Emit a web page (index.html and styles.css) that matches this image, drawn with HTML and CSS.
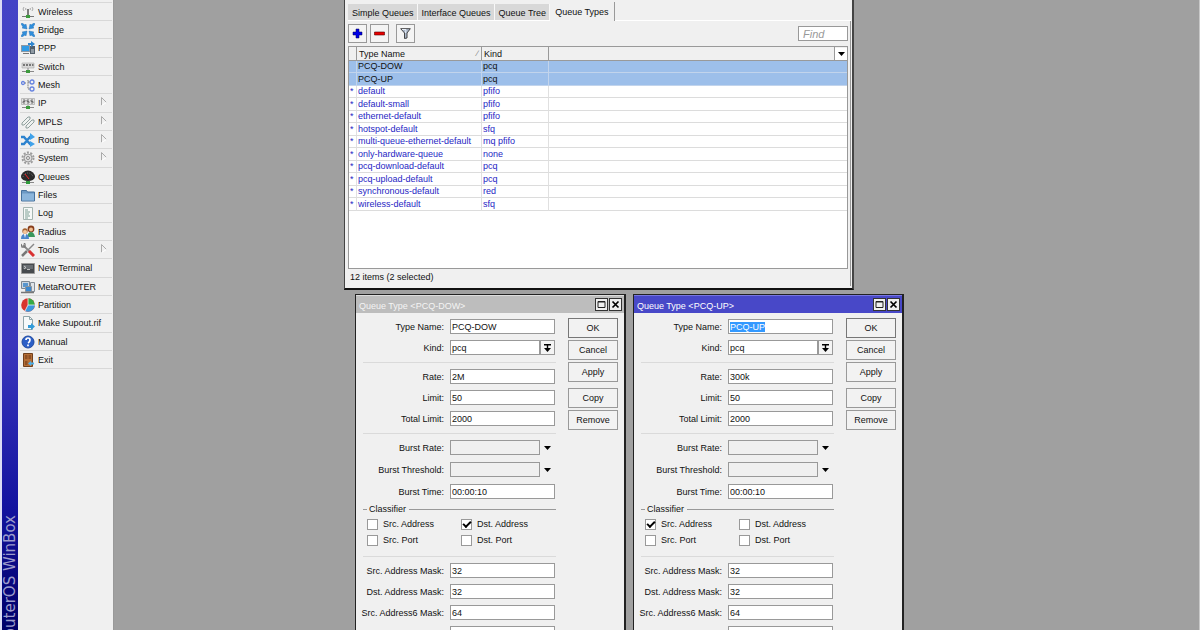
FILE: index.html
```html
<!DOCTYPE html>
<html lang="en">
<head>
<meta charset="utf-8">
<title>RouterOS WinBox</title>
<link rel="stylesheet" href="styles.css">
</head>
<body>
<div class="app">
  <div class="rail"><span class="rail-text">RouterOS WinBox</span></div>
  <nav class="side">
    <ul class="menu">
      <li><a href="#"><svg viewBox="0 0 14 14"><path d="M3 2q-2 2 0 4M11 2q2 2 0 4M5 3q-1 1 0 2M9 3q1 1 0 2" fill="none" stroke="#aaa"/><path d="M7 4v7" stroke="#555" stroke-width="1.5"/><path d="M1 11.500h12" stroke="#777"/><path d="M5 10h4v3H5z" fill="#3c9a3c"/></svg>Wireless</a></li>
      <li><a href="#"><svg viewBox="0 0 14 14"><g fill="#2f8fdc" stroke="#1c65ab" stroke-width=".4"><path d="M0 1l1-1 3 2 1-1 1 5-5-1 1-1zM14 1l-1-1-3 2-1-1-1 5 5-1-1-1zM0 13l1 1 3-2 1 1 1-5-5 1 1 1zM14 13l-1 1-3-2-1 1-1-5 5 1-1 1z"/></g></svg>Bridge</a></li>
      <li><a href="#"><svg viewBox="0 0 14 14"><path d="M0 4h9v7H0z" fill="#8c98a4"/><path d="M1 5h7v5H1z" fill="#2f9be6"/><path d="M2 12h6v1H2z" fill="#777"/><path d="M9 5h5v8H9z" fill="#53606c"/><path d="M10 9h3M10 11h3" stroke="#cdd5dc"/><path d="M7 4V2h3V0l4 3-4 3V4z" fill="#2e86d0"/></svg>PPP</a></li>
      <li><a href="#"><svg viewBox="0 0 14 14"><path d="M1 3h12v5H1z" fill="#d8d8d8" stroke="#aaa" stroke-width=".6"/><path d="M2 5h2M5 5h2M8 5h2M11 5h1.500" stroke="#777" stroke-width="2"/><path d="M7 8v3M1 11.500h12" stroke="#888"/><path d="M5 10h4v3H5z" fill="#3c9a3c"/></svg>Switch</a></li>
      <li><a href="#"><svg viewBox="0 0 14 14"><g fill="none" stroke="#6683e0" stroke-width="1.300"><circle cx="2" cy="5" r="1.500"/><circle cx="11" cy="4" r="2"/><circle cx="11" cy="11" r="2"/></g><path d="M4 5h1M7 2v9M7 4h2M7 11h2" fill="none" stroke="#777" stroke-dasharray="1.500 .7"/></svg>Mesh</a></li>
      <li><a href="#"><svg viewBox="0 0 14 14"><path d="M.5 2.500h13v6H.5z" fill="#e2e2e2" stroke="#aaa" stroke-width=".7"/><path d="M2 4h2v1.500H2V7h2M8 4H6v1.500h2V7H6M12 4h-2v1.500h2V7h-2" fill="none" stroke="#555" stroke-width=".8"/><path d="M7 9v2M1 11.500h12" stroke="#888"/><path d="M5 10h4v3H5z" fill="#3c9a3c"/></svg>IP<svg class="more" viewBox="0 0 6 9"><path d="M.5 8.500V.5l5 5" fill="none" stroke="#aaa"/><path d="M5.500 5.500l-5 3" stroke="#fff"/></svg></a></li>
      <li><a href="#"><svg viewBox="0 0 14 14"><path d="M1 8l6-6 2 0 0 2-6 6-2 0zM5 11l6-6 2 0 0 2-6 6-2 0z" fill="#eef1f0" stroke="#849694" stroke-width=".9"/></svg>MPLS<svg class="more" viewBox="0 0 6 9"><path d="M.5 8.500V.5l5 5" fill="none" stroke="#aaa"/><path d="M5.500 5.500l-5 3" stroke="#fff"/></svg></a></li>
      <li><a href="#"><svg viewBox="0 0 14 14"><path d="M0 4h3l6 7h2M0 11h3l6-7h2" fill="none" stroke="#2d83cf" stroke-width="2.400"/><path d="M9 0l5 4-5 3zM9 8l5 3-5 3z" fill="#3fa2ea"/></svg>Routing<svg class="more" viewBox="0 0 6 9"><path d="M.5 8.500V.5l5 5" fill="none" stroke="#aaa"/><path d="M5.500 5.500l-5 3" stroke="#fff"/></svg></a></li>
      <li><a href="#"><svg viewBox="0 0 14 14"><circle cx="7" cy="7" r="5.500" fill="none" stroke="#9b9b9b" stroke-width="2" stroke-dasharray="2 1.450"/><circle cx="7" cy="7" r="4" fill="#ddd" stroke="#999"/><circle cx="7" cy="7" r="1.500" fill="#f6f6f6" stroke="#888"/></svg>System<svg class="more" viewBox="0 0 6 9"><path d="M.5 8.500V.5l5 5" fill="none" stroke="#aaa"/><path d="M5.500 5.500l-5 3" stroke="#fff"/></svg></a></li>
      <li><a href="#"><svg viewBox="0 0 14 14"><path d="M0 7a7 6.500 0 0 1 14 0q-1 4-7 4T0 7z" fill="#292929"/><path d="M2 7q1-4 5-4t5 4" fill="none" stroke="#888" stroke-width=".7" stroke-dasharray="1 1"/><path d="M4 4l4 5" stroke="#e22"/><path d="M1 12.500h12" stroke="#888"/><path d="M5 11h4v3H5z" fill="#2f9a3a"/></svg>Queues</a></li>
      <li><a href="#"><svg viewBox="0 0 14 14"><path d="M.5 2.500h5l1 1.500h7v9H.5z" fill="#6c99c4" stroke="#47719c"/><path d="M1 5.500h12v7H1z" fill="#8cb5db"/></svg>Files</a></li>
      <li><a href="#"><svg viewBox="0 0 14 14"><path d="M2.500 1.500h9v12h-9z" fill="#f6f9f8" stroke="#a4b5b0"/><path d="M4 4h3M4 6h5M4 8h4M4 10h5M4 12h3" stroke="#7fa095"/></svg>Log</a></li>
      <li><a href="#"><svg viewBox="0 0 14 14"><circle cx="10" cy="4" r="3.400" fill="#883d1c"/><circle cx="10" cy="4.500" r="2" fill="#f0bd90"/><path d="M6 12q1-5 4-5t4 5z" fill="#39975c"/><circle cx="4" cy="6" r="2.700" fill="#a46331"/><circle cx="4" cy="7" r="2" fill="#f4c69b"/><path d="M0 14q0-5 4-5t4 5z" fill="#4a86cb"/><path d="M3 9l1 4 1-4z" fill="#fff"/></svg>Radius</a></li>
      <li><a href="#"><svg viewBox="0 0 14 14"><path d="M2 2l10 10" stroke="#888" stroke-width="1.800"/><path d="M0 1l1 3 3 0 0-3-1-1" fill="none" stroke="#777" stroke-width="1.300"/><path d="M13 1L7 7" stroke="#888" stroke-width="1.500"/><path d="M1 13l5-5" stroke="#777" stroke-width="2.500"/><path d="M8 8l5 5" stroke="#d93131" stroke-width="3"/></svg>Tools<svg class="more" viewBox="0 0 6 9"><path d="M.5 8.500V.5l5 5" fill="none" stroke="#aaa"/><path d="M5.500 5.500l-5 3" stroke="#fff"/></svg></a></li>
      <li><a href="#"><svg viewBox="0 0 14 14"><path d="M.5 2.500h13v10H.5z" fill="#464a4e" stroke="#999"/><path d="M2 4h10v4H2z" fill="#686d72"/><path d="M3 5l2 1.500L3 8M6 8.500h3" fill="none" stroke="#ddd" stroke-width=".8"/></svg>New Terminal</a></li>
      <li><a href="#"><svg viewBox="0 0 14 14"><path d="M.5 1.500h8v7h-8z" fill="#c9d6e1" stroke="#7c8791"/><path d="M2 3h5v4H2z" fill="#5796cf"/><path d="M9.500 2.500h4v9h-4z" fill="#dfe4e8" stroke="#858e96"/><path d="M4.500 6.500h6v5h-6z" fill="#3c89d0" stroke="#8a949d"/><path d="M0 12.500h13" stroke="#777" stroke-width="1.500"/></svg>MetaROUTER</a></li>
      <li><a href="#"><svg viewBox="0 0 14 14"><circle cx="7" cy="7" r="6.800" fill="#d8332c"/><path d="M7 7V.2A6.800 6.800 0 0 1 13.800 7z" fill="#35aa45"/><path d="M7 7h6.800A6.800 6.800 0 0 1 4 13z" fill="#3b97dc"/><path d="M7 0v7h7M7 7l-3 6" fill="none" stroke="#fff" stroke-width=".7"/></svg>Partition</a></li>
      <li><a href="#"><svg viewBox="0 0 14 14"><path d="M2.500.5h6l3 3v10h-9z" fill="#f5f9fa" stroke="#8fa5a9"/><path d="M8.500.5v3h3" fill="none" stroke="#8fa5a9"/><path d="M7 9h3V7l4 3.500-4 3.500v-2H7z" fill="#329bd9"/></svg>Make Supout.rif</a></li>
      <li><a href="#"><svg viewBox="0 0 14 14"><circle cx="7" cy="7" r="6" fill="#2c5fc7" stroke="#204a9e"/><path d="M5 5q0-2 2-2t2 2-2 3M7 9.500v1.800" fill="none" stroke="#fff" stroke-width="1.700"/></svg>Manual</a></li>
      <li><a href="#"><svg viewBox="0 0 14 14"><path d="M2.500.5h9v13h-9z" fill="#b56f38" stroke="#70401c"/><path d="M4 2h2.500v4H4zM7.500 2H10v4H7.500zM4 8h2.500v4H4z" fill="#8e5125"/><path d="M13 11.500h-3V13l-3-2.500L10 8v1.500h3z" fill="#4fb0e8"/></svg>Exit</a></li>
    </ul>
  </nav>

  <main class="desktop">
    <section class="win queues">
      <div class="tabs" role="tablist">
        <button class="tab" role="tab">Simple Queues</button><button class="tab" role="tab">Interface Queues</button><button class="tab" role="tab">Queue Tree</button><button class="tab active" role="tab" aria-selected="true">Queue Types</button>
      </div>
      <div class="pane">
        <div class="toolbar">
          <button class="tool" aria-label="Add"><svg viewBox="0 0 11 11"><path d="M4 1h3v3h3v3H7v3H4V7H1V4h3z" fill="#0000e6" stroke="#000050" stroke-width=".5"/></svg></button>
          <button class="tool" aria-label="Remove"><svg viewBox="0 0 11 11"><path d="M.5 4h10v3H.5z" fill="#e80000" stroke="#500" stroke-width=".6"/></svg></button>
          <button class="tool filter" aria-label="Filter"><svg viewBox="0 0 11 11"><path d="M.7.7h9.600L7 5v5l-2.500.5V5z" fill="#a9b6c9" stroke="#444" stroke-width="1"/><path d="M2 1.500h4L5.500 5" fill="none" stroke="#e7edf5"/></svg></button>
          <input class="find" type="text" placeholder="Find" aria-label="Find">
        </div>
        <div class="list">
          <table>
            <colgroup><col class="c-flag"><col class="c-name"><col class="c-kind"><col><col class="c-drop"></colgroup>
            <thead><tr><th></th><th><span class="sortable">Type Name<i>∕</i></span></th><th>Kind</th><th></th><th><button class="drop" aria-label="Columns"><svg viewBox="0 0 7 4"><path d="M0 0h7L3.500 4z"/></svg></button></th></tr></thead>
            <tbody>
              <tr class="sel"><td></td><td>PCQ-DOW</td><td>pcq</td><td colspan="2"></td></tr>
              <tr class="sel"><td></td><td>PCQ-UP</td><td>pcq</td><td colspan="2"></td></tr>
              <tr><td>*</td><td>default</td><td>pfifo</td><td colspan="2"></td></tr>
              <tr><td>*</td><td>default-small</td><td>pfifo</td><td colspan="2"></td></tr>
              <tr><td>*</td><td>ethernet-default</td><td>pfifo</td><td colspan="2"></td></tr>
              <tr><td>*</td><td>hotspot-default</td><td>sfq</td><td colspan="2"></td></tr>
              <tr><td>*</td><td>multi-queue-ethernet-default</td><td>mq pfifo</td><td colspan="2"></td></tr>
              <tr><td>*</td><td>only-hardware-queue</td><td>none</td><td colspan="2"></td></tr>
              <tr><td>*</td><td>pcq-download-default</td><td>pcq</td><td colspan="2"></td></tr>
              <tr><td>*</td><td>pcq-upload-default</td><td>pcq</td><td colspan="2"></td></tr>
              <tr><td>*</td><td>synchronous-default</td><td>red</td><td colspan="2"></td></tr>
              <tr><td>*</td><td>wireless-default</td><td>sfq</td><td colspan="2"></td></tr>
            </tbody>
          </table>
        </div>
        <div class="status">12 items (2 selected)</div>
      </div>
    </section>

    <section class="win dialog dow">
      <header class="title"><span>Queue Type &lt;PCQ-DOW&gt;</span><button class="cap" aria-label="Maximize"><svg viewBox="0 0 9 9"><path d="M1 1.500h7v6H1zM1 2h7" fill="none" stroke="#222"/></svg></button><button class="cap" aria-label="Close"><svg viewBox="0 0 9 9"><path d="M1.500 1.500l6 6M7.500 1.500l-6 6" stroke="#000" stroke-width="1.700"/></svg></button></header>
      <div class="body">
        <form class="form">
          <div class="group">
            <label for="a1">Type Name:</label><input id="a1" type="text" value="PCQ-DOW">
            <label for="a2">Kind:</label><div class="combo"><select id="a2"><option>pcq</option></select><button class="pick" type="button" aria-label="Choose kind"><svg viewBox="0 0 7 8"><path d="M0 .7h7M3.500 1v4" stroke="#000" stroke-width="1.400"/><path d="M0 4h7L3.500 8z"/></svg></button></div>
          </div>
          <hr>
          <div class="group">
            <label for="a3">Rate:</label><input id="a3" type="text" value="2M">
            <label for="a4">Limit:</label><input id="a4" type="text" value="50">
            <label for="a5">Total Limit:</label><input id="a5" type="text" value="2000">
          </div>
          <hr>
          <div class="group loose">
            <label for="a6">Burst Rate:</label><div class="combo"><input id="a6" type="text" disabled><button class="open" type="button" aria-label="Set burst rate"><svg viewBox="0 0 7 4"><path d="M0 0h7L3.500 4z"/></svg></button></div>
            <label for="a7">Burst Threshold:</label><div class="combo"><input id="a7" type="text" disabled><button class="open" type="button" aria-label="Set burst threshold"><svg viewBox="0 0 7 4"><path d="M0 0h7L3.500 4z"/></svg></button></div>
            <label for="a8">Burst Time:</label><input id="a8" type="text" value="00:00:10">
          </div>
          <fieldset>
            <legend>Classifier</legend>
            <label><input type="checkbox">Src. Address</label><label><input type="checkbox" checked>Dst. Address</label>
            <label><input type="checkbox">Src. Port</label><label><input type="checkbox">Dst. Port</label>
          </fieldset>
          <hr>
          <div class="group">
            <label for="a9">Src. Address Mask:</label><input id="a9" type="text" value="32">
            <label for="a10">Dst. Address Mask:</label><input id="a10" type="text" value="32">
            <label for="a11">Src. Address6 Mask:</label><input id="a11" type="text" value="64">
            <span></span><input type="text" aria-label="Dst. Address6 Mask">
          </div>
        </form>
        <div class="actions"><button>OK</button><button>Cancel</button><button>Apply</button><button class="apart">Copy</button><button>Remove</button></div>
      </div>
    </section>

    <section class="win dialog up">
      <header class="title"><span>Queue Type &lt;PCQ-UP&gt;</span><button class="cap" aria-label="Maximize"><svg viewBox="0 0 9 9"><path d="M1 1.500h7v6H1zM1 2h7" fill="none" stroke="#222"/></svg></button><button class="cap" aria-label="Close"><svg viewBox="0 0 9 9"><path d="M1.500 1.500l6 6M7.500 1.500l-6 6" stroke="#000" stroke-width="1.700"/></svg></button></header>
      <div class="body">
        <form class="form">
          <div class="group">
            <label for="b1">Type Name:</label><input id="b1" type="text" value="PCQ-UP">
            <label for="b2">Kind:</label><div class="combo"><select id="b2"><option>pcq</option></select><button class="pick" type="button" aria-label="Choose kind"><svg viewBox="0 0 7 8"><path d="M0 .7h7M3.500 1v4" stroke="#000" stroke-width="1.400"/><path d="M0 4h7L3.500 8z"/></svg></button></div>
          </div>
          <hr>
          <div class="group">
            <label for="b3">Rate:</label><input id="b3" type="text" value="300k">
            <label for="b4">Limit:</label><input id="b4" type="text" value="50">
            <label for="b5">Total Limit:</label><input id="b5" type="text" value="2000">
          </div>
          <hr>
          <div class="group loose">
            <label for="b6">Burst Rate:</label><div class="combo"><input id="b6" type="text" disabled><button class="open" type="button" aria-label="Set burst rate"><svg viewBox="0 0 7 4"><path d="M0 0h7L3.500 4z"/></svg></button></div>
            <label for="b7">Burst Threshold:</label><div class="combo"><input id="b7" type="text" disabled><button class="open" type="button" aria-label="Set burst threshold"><svg viewBox="0 0 7 4"><path d="M0 0h7L3.500 4z"/></svg></button></div>
            <label for="b8">Burst Time:</label><input id="b8" type="text" value="00:00:10">
          </div>
          <fieldset>
            <legend>Classifier</legend>
            <label><input type="checkbox" checked>Src. Address</label><label><input type="checkbox">Dst. Address</label>
            <label><input type="checkbox">Src. Port</label><label><input type="checkbox">Dst. Port</label>
          </fieldset>
          <hr>
          <div class="group">
            <label for="b9">Src. Address Mask:</label><input id="b9" type="text" value="32">
            <label for="b10">Dst. Address Mask:</label><input id="b10" type="text" value="32">
            <label for="b11">Src. Address6 Mask:</label><input id="b11" type="text" value="64">
            <span></span><input type="text" aria-label="Dst. Address6 Mask">
          </div>
        </form>
        <div class="actions"><button>OK</button><button>Cancel</button><button>Apply</button><button class="apart">Copy</button><button>Remove</button></div>
      </div>
    </section>
  </main>
</div>
<script src="app.js"></script>
</body>
</html>
```

FILE: styles.css
```css
* { box-sizing: border-box; }
body { margin: 0; background: #a0a0a0; }
body, button, input, select {
  font-family: "Liberation Sans", Arial, sans-serif;
  font-size: 9px;
  line-height: 12px;
  color: #111;
}
button, input, select { margin: 0; padding: 0; border-radius: 0; }
svg { display: block; flex: none; }

.app { display: flex; height: 100vh; overflow: hidden; border-right: 1px solid #c8c8c8; }

.rail {
  flex: none;
  width: 18px;
  display: flex;
  align-items: flex-end;
  justify-content: center;
  border-left: 2px solid #dcdcf4;
  background: linear-gradient(#4444c6, #3a36bc 55%, #1414a0 80%, #000068);
}
.rail-text {
  writing-mode: vertical-rl;
  transform: rotate(180deg);
  margin-bottom: -17px;
  white-space: nowrap;
  font: 15px/16px "DejaVu Sans", sans-serif;
  color: #9c9ccc;
}

.side { flex: none; width: 96px; padding: 2px 1px 0 2px; background: #f0f0f0; border-right: 1px solid #999; }
.menu { list-style: none; margin: 0; padding: 0; display: grid; grid-auto-rows: 18px 18px 19px; border-top: 1px solid #d8d8d8; }
.menu li { border-bottom: 1px solid #d8d8d8; }
.menu a { display: flex; align-items: center; gap: 3px; height: 100%; padding-left: 1px; color: #111; text-decoration: none; white-space: nowrap; }
.menu svg { width: 14px; height: 14px; }
.menu .more { width: 6px; height: 9px; margin: 0 5px 3px auto; }

.desktop { position: relative; flex: 1; min-width: 0; overflow: hidden; background: #a0a0a0; }
.win { position: absolute; background: #f0f0f0; border: 1px solid #222; }

.queues { left: 230px; top: -1px; width: 510px; padding: 1px 1px 2px 3px; border-width: 1px 2px 2px 1px; border-color: #555 #444 #111 #444; }
.tabs { display: flex; align-items: flex-end; height: 20px; border-bottom: 1px solid #fff; }
.tab { flex: none; height: 16px; padding: 1px 4px 0; border: 0; border-right: 1px solid #f8f8f8; background: #d8d8d8; }
.tab:nth-child(-n+3) { padding: 1px 3px 0 4px; }
.tab.active { height: 19px; margin-bottom: -1px; padding: 0 5px; border-right: 1px solid #999; background: #f0f0f0; }
.pane { border-right: 1px solid #999; padding-right: 2px; }
.toolbar { display: flex; align-items: center; gap: 3px; height: 25px; }
.tool { display: grid; place-items: center; width: 19px; height: 19px; border: 1px solid #999; background: #f4f4f4; }
.tool svg { width: 11px; height: 11px; }
.filter { margin-left: 4px; }
.find { width: 50px; height: 15px; margin-left: auto; padding: 0 4px; border: 1px solid #999; font-size: 11px; font-style: italic; }
.find::placeholder { color: #999; opacity: 1; }

.list { height: 223px; border: 1px solid #999; background: #fff; }
table { width: 100%; table-layout: fixed; border-collapse: separate; border-spacing: 0; }
.c-flag { width: 7px; } .c-name { width: 125px; } .c-kind { width: 67px; } .c-drop { width: 13px; }
th { height: 14px; padding: 0 0 0 2px; font-weight: normal; text-align: left; background: #f0f0f0; border-bottom: 1px solid #999; border-left: 1px solid #999; line-height: 12px; }
th:first-child { border-left: 0; }
th:last-child { padding: 0; }
.sortable { display: flex; justify-content: space-between; padding-right: 3px; }
.sortable i { color: #777; font-style: normal; font-size: 8px; }
.drop { display: grid; place-items: center; width: 100%; height: 12px; border: 0; background: #fff; }
.drop svg, .open svg { width: 7px; height: 4px; }
td { height: 12px; padding: 0 0 0 1px; line-height: 11px; color: #2626c4; white-space: nowrap; border-bottom: 1px solid #dcdcdc; border-left: 1px solid #e0e0e0; }
tr:nth-child(even) td { height: 13px; }
td:first-child { border-left: 0; }
.sel td { color: #111; background: #9dbfea; border-color: #c2d4ec; }
.status { height: 17px; padding: 2px; line-height: 13px; }

.dialog { top: 294px; width: 271px; border-right-width: 2px; }
.dow { left: 241px; }
.up { left: 519px; }
.title { display: flex; align-items: center; gap: 1px; height: 18px; padding: 0 2px 0 3px; color: #f4f4f4; background: #bdbdbd; border-top: 1px solid #ddd; }
.title span { flex: 1; padding-top: 2px; }
.up .title { background: #4848c8; border-color: #7777e0; color: #fff; }
.cap { display: grid; place-items: center; width: 13px; height: 13px; border: 1px solid #333; background: #f0f0f0; }
.cap svg { width: 9px; height: 9px; }
.body { display: flex; justify-content: space-between; padding: 5px 6px 7px 7px; }
.form { width: 193px; padding-top: 1px; }
.group { display: grid; grid-template-columns: 81px 105px; column-gap: 6px; row-gap: 6px; align-items: center; }
.group.loose { row-gap: 7px; }
.group > label { justify-self: end; padding-top: 1px; line-height: 14px; white-space: nowrap; }
.form input[type="text"], select { width: 105px; height: 15px; padding: 1px 2px 0 1px; border: 1px solid #999; background: #fff; outline: 0; }
.combo { display: flex; height: 15px; }
.combo input[type="text"], .combo select { width: 90px; }
.form input:disabled { background: #f0f0f0; }
select { appearance: none; }
.pick { display: grid; place-items: center; width: 15px; height: 15px; border: 1px solid #999; background: #f4f4f4; }
.pick svg { width: 7px; height: 8px; }
.open { display: grid; place-items: center; width: 16px; border: 0; background: transparent; }
hr { margin: 7px 0 6px; border: 0; border-top: 1px solid #dadada; }
fieldset { display: grid; grid-template-columns: 94px 94px; row-gap: 2px; margin: 4px 0 0; padding: 2px 0 2px 4px; border: 0; border-top: 1px solid #999; min-width: 0; }
legend { margin-left: 0; padding: 0 3px 0 2px; line-height: 12px; }
fieldset label { display: flex; align-items: center; gap: 5px; height: 14px; }
fieldset input { appearance: none; display: grid; place-items: center; width: 11px; height: 11px; border: 1px solid #999; background: #fff; }
fieldset input:checked::after { content: ""; width: 6px; height: 3px; margin-top: -2px; border: solid #000; border-width: 0 0 2px 2px; transform: rotate(-45deg); }
.actions { display: flex; flex-direction: column; gap: 2px; width: 50px; }
.actions button { height: 20px; border: 1px solid #999; background: #f2f2f2; }
.actions button:first-child { border-color: #777; }
.actions .apart { margin-top: 4px; }
#b1::selection { background: #3399ff; color: #fff; }
```

FILE: app.js
```js
const nameField = document.getElementById("b1");
nameField.focus({ preventScroll: true });
nameField.select();
```
